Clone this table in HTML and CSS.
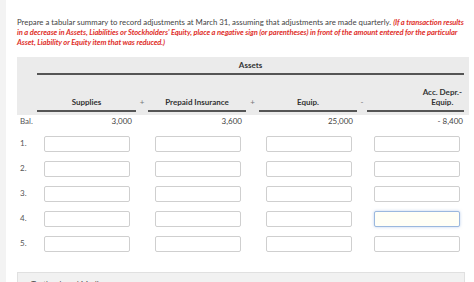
FILE: index.html
```html
<!DOCTYPE html>
<html>
<head>
<meta charset="utf-8">
<link rel="stylesheet" href="styles.css">
</head>
<body>
<div class="page">
  <div class="strip"></div>
  <div class="main">
    <p class="prompt">Prepare a tabular summary to record adjustments at March 31, assuming that adjustments are made quarterly. <span class="note">(If a transaction results<br>in a decrease in Assets, Liabilities or Stockholders' Equity, place a negative sign (or parentheses) in front of the amount entered for the particular<br>Asset, Liability or Equity item that was reduced.)</span></p>

    <div class="head">
      <div class="grid assets-row">
        <div class="assets">Assets</div>
      </div>
      <div class="grid cols-row">
        <div></div>
        <div class="col">Supplies</div>
        <div class="sep">+</div>
        <div class="col">Prepaid Insurance</div>
        <div class="sep">+</div>
        <div class="col">Equip.</div>
        <div class="sep">-</div>
        <div class="col col-last"><span class="two">Acc. Depr.-<br>Equip.</span></div>
      </div>
    </div>

    <div class="grid bal-row">
      <div class="lbl">Bal.</div>
      <div class="val">3,000</div>
      <div></div>
      <div class="val">3,600</div>
      <div></div>
      <div class="val">25,000</div>
      <div></div>
      <div class="val val-last">- 8,400</div>
    </div>

    <div class="grid in-row">
      <div class="lbl">1.</div>
      <div><input class="box" type="text"></div><div></div>
      <div><input class="box" type="text"></div><div></div>
      <div><input class="box" type="text"></div><div></div>
      <div><input class="box" type="text"></div>
    </div>
    <div class="grid in-row">
      <div class="lbl">2.</div>
      <div><input class="box" type="text"></div><div></div>
      <div><input class="box" type="text"></div><div></div>
      <div><input class="box" type="text"></div><div></div>
      <div><input class="box" type="text"></div>
    </div>
    <div class="grid in-row">
      <div class="lbl">3.</div>
      <div><input class="box" type="text"></div><div></div>
      <div><input class="box" type="text"></div><div></div>
      <div><input class="box" type="text"></div><div></div>
      <div><input class="box" type="text"></div>
    </div>
    <div class="grid in-row">
      <div class="lbl">4.</div>
      <div><input class="box" type="text"></div><div></div>
      <div><input class="box" type="text"></div><div></div>
      <div><input class="box" type="text"></div><div></div>
      <div><input class="box focus" type="text"></div>
    </div>
    <div class="grid in-row">
      <div class="lbl">5.</div>
      <div><input class="box" type="text"></div><div></div>
      <div><input class="box" type="text"></div><div></div>
      <div><input class="box" type="text"></div><div></div>
      <div><input class="box" type="text"></div>
    </div>

    <div class="media">eTextbook and Media</div>
  </div>
</div>
</body>
</html>
```
FILE: styles.css
```css
html, body {
  margin: 0;
  padding: 0;
  background: #ffffff;
  overflow: hidden;
}
body {
  font-family: Lato, "Open Sans", sans-serif;
  font-size: 8px;
  color: #444444;
}
.page {
  display: flex;
  height: 282px;
}
.strip {
  width: 6px;
  flex: none;
  background: #f3f3f3;
}
.main {
  flex: 1;
  padding: 17px 10px 0 11px;
}
.prompt {
  margin: 0;
  font-size: 7.8px;
  line-height: 10px;
  width: 452px;
  white-space: nowrap;
}
.note {
  color: #e0312c;
  font-weight: bold;
  font-style: italic;
  font-size: 7.6px;
  letter-spacing: -0.1px;
}
.grid {
  display: grid;
  grid-template-columns: 20px 99px 12px 98px 13px 98px 10px 97px;
}
.head {
  margin-top: 10px;
  background: #ebebeb;
  padding-bottom: 3px;
}
.assets-row {
  height: 18px;
}
.assets {
  grid-column: 2 / -1;
  border-bottom: 2px solid #555555;
  text-align: center;
  font-weight: bold;
  line-height: 16px;
  color: #333333;
}
.cols-row {
  height: 37px;
}
.col {
  border-bottom: 2px solid #555555;
  display: flex;
  align-items: flex-end;
  justify-content: center;
  padding-bottom: 3px;
  font-weight: bold;
  color: #333333;
  line-height: 10px;
}
.col-last {
  justify-content: flex-end;
  padding-right: 2px;
}
.two {
  text-align: center;
}
.sep {
  display: flex;
  align-items: flex-end;
  justify-content: center;
  padding-bottom: 5px;
  color: #777777;
  line-height: 10px;
}
.bal-row {
  height: 16px;
  line-height: 13px;
}
.lbl {
  padding-left: 3px;
  color: #555555;
}
.val {
  text-align: right;
  padding-right: 4px;
}
.val-last {
  padding-right: 1px;
}
.in-row {
  height: 25px;
  align-items: center;
}
.in-row .lbl {
  line-height: 25px;
}
.box {
  display: block;
  box-sizing: border-box;
  width: 86px;
  height: 16px;
  margin: 0 0 0 7px;
  border: 1px solid #cfcfcf;
  border-radius: 2px;
  background: #ffffff;
  padding: 0;
}
.focus {
  border-color: #9bb8de;
  background: #fffff6;
  box-shadow: 0 0 3px rgba(120, 160, 220, 0.5);
}
.media {
  margin-top: 16px;
  width: 436px;
  height: 20px;
  background: #f1f1f1;
  border: 1px solid #e0e0e0;
  padding-left: 10px;
  line-height: 14px;
  padding-top: 4px;
  color: #555555;
}
```
